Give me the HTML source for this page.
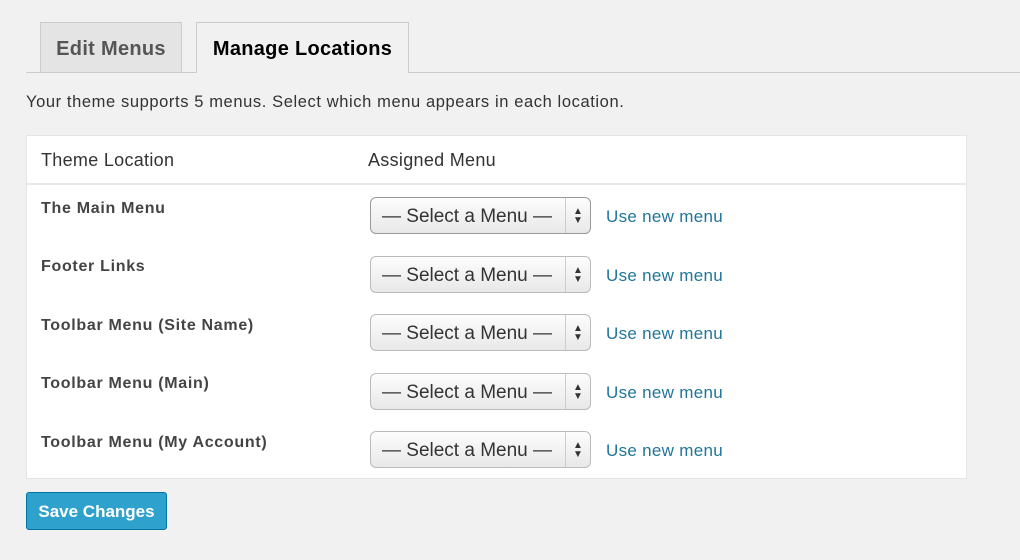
<!DOCTYPE html><html><head><style>
body{margin:0;background:#f1f1f1;width:1020px;height:560px;position:relative;font-family:"Liberation Sans",sans-serif;overflow:hidden}
.a{position:absolute}
.tab{position:absolute;top:22px;height:50px;border:1px solid #ccc;border-bottom:none;box-sizing:border-box;font-weight:bold;font-size:20px;line-height:52px;text-align:center;letter-spacing:0.3px}
.sel{position:absolute;left:370px;width:221px;height:37px;box-sizing:border-box;border:1px solid #bbb;border-radius:6px;background:linear-gradient(#fdfdfd,#e8e8e8);font-size:19px;color:#333;line-height:37px}
.sel span{position:absolute;left:11px}
.sel i{position:absolute;right:0;top:0;width:25px;height:35px;border-left:1px solid #ccc;font-style:normal;font-size:10px;line-height:9px;text-align:center;padding-top:9px;box-sizing:border-box;color:#333}
.lbl{position:absolute;left:41px;font-weight:bold;font-size:16px;color:#444;letter-spacing:0.7px}
.lnk{position:absolute;left:606px;font-size:17px;color:#21759b;letter-spacing:0.3px}
</style></head><body>
<div class="a" style="left:26px;right:0;top:72px;height:1px;background:#ccc"></div>
<div class="tab" style="left:40px;width:142px;background:#e4e4e4;color:#555">Edit Menus</div>
<div class="tab" style="left:196px;width:213px;height:51px;background:#f1f1f1;color:#000">Manage Locations</div>
<div class="a" style="left:26px;top:93px;font-size:16.5px;letter-spacing:0.6px;color:#333">Your theme supports 5 menus. Select which menu appears in each location.</div>
<div class="a" style="left:26px;top:135px;width:941px;height:344px;background:#fff;border:1px solid #e5e5e5;box-sizing:border-box"></div>
<div class="a" style="left:27px;top:183px;width:939px;height:2px;background:#e8e8e8"></div>
<div class="a" style="left:41px;top:150px;font-size:18px;color:#333;letter-spacing:0.3px">Theme Location</div>
<div class="a" style="left:368px;top:150px;font-size:18px;color:#333;letter-spacing:0.3px">Assigned Menu</div>
<div class="lbl" style="top:200px">The Main Menu</div>
<div class="lbl" style="top:258px">Footer Links</div>
<div class="lbl" style="top:317px">Toolbar Menu (Site Name)</div>
<div class="lbl" style="top:375px">Toolbar Menu (Main)</div>
<div class="lbl" style="top:434px">Toolbar Menu (My Account)</div>
<div class="sel" style="top:197px;border-color:#999"><span>— Select a Menu —</span><i>▲<br>▼</i></div>
<div class="sel" style="top:256px"><span>— Select a Menu —</span><i>▲<br>▼</i></div>
<div class="sel" style="top:314px"><span>— Select a Menu —</span><i>▲<br>▼</i></div>
<div class="sel" style="top:373px"><span>— Select a Menu —</span><i>▲<br>▼</i></div>
<div class="sel" style="top:431px"><span>— Select a Menu —</span><i>▲<br>▼</i></div>
<div class="lnk" style="top:207px">Use new menu</div>
<div class="lnk" style="top:266px">Use new menu</div>
<div class="lnk" style="top:324px">Use new menu</div>
<div class="lnk" style="top:383px">Use new menu</div>
<div class="lnk" style="top:441px">Use new menu</div>
<div class="a" style="left:26px;top:492px;width:141px;height:38px;box-sizing:border-box;background:#2ea2cc;border:1px solid #0074a2;border-radius:3px;color:#fff;font-weight:bold;font-size:17px;line-height:38px;text-align:center">Save Changes</div>
</body></html>
